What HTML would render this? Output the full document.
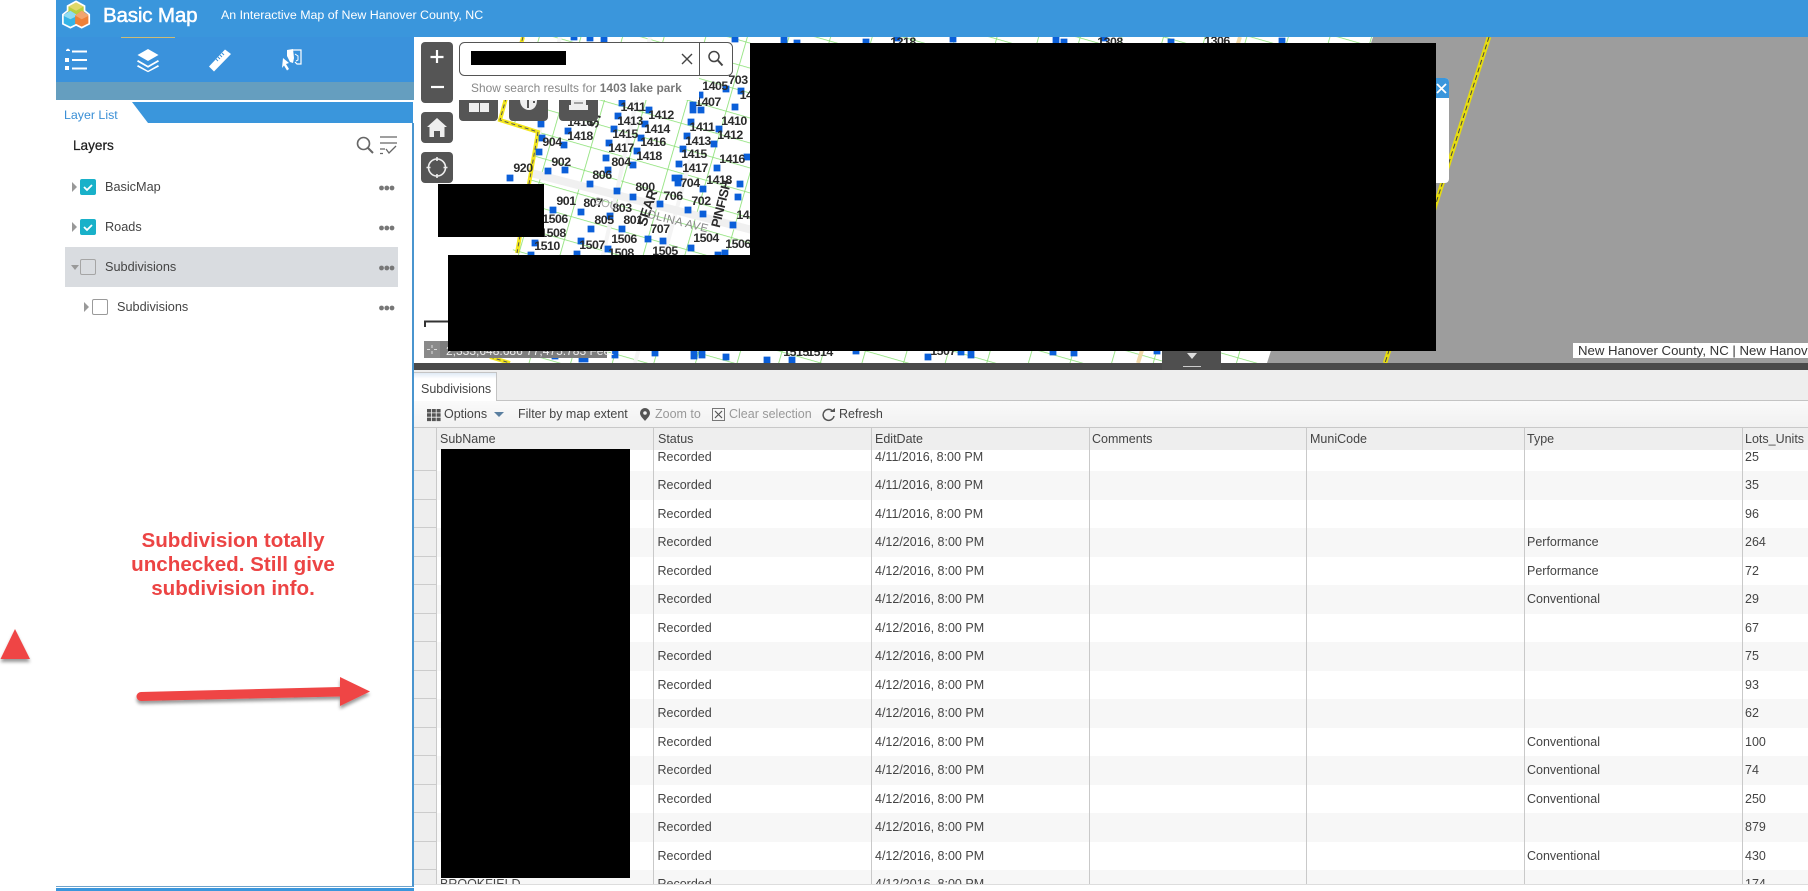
<!DOCTYPE html>
<html lang="en"><head><meta charset="utf-8"><title>Basic Map</title>
<style>
html,body{margin:0;padding:0;background:#fff;width:1808px;height:891px;overflow:hidden}
body{position:relative;font-family:"Liberation Sans",sans-serif;color:#333}
.a{position:absolute}
.t{position:absolute;white-space:nowrap}
#top{left:56px;top:0;width:1752px;height:37px;background:#3a96dc}
#icons{left:56px;top:37px;width:358px;height:45px;background:#3a92dc}
#tealbar{left:56px;top:82px;width:358px;height:18px;background:#659ebf}
#tabs{left:56px;top:102px;width:357px;height:21px;background:#3a96dc}
#panel{left:56px;top:123px;width:356px;height:763px;background:#fff}
.lbl{font-size:12.7px;color:#333;transform:translateY(-50%)}
.row{position:absolute;left:414px;width:1394px;height:28.5px;overflow:hidden}
.row .c{position:absolute;top:0;line-height:28.5px;font-size:12.5px;color:#444;white-space:nowrap}
.alt{background:#f7f7f7}
.sel{position:absolute;left:0;top:0;width:22px;height:100%;background:#eee;border-bottom:1px solid #ccc;box-sizing:border-box}
.c1{left:26px}.c2{left:243.5px}.c3{left:461px}.c6{left:1113px}.c7{left:1331px}
.vl{position:absolute;top:428px;width:1px;height:456px;background:#c9c9c9}
.hd{position:absolute;top:428px;font-size:12.5px;line-height:22px;color:#444;white-space:nowrap}
.tb{position:absolute;top:401px;font-size:12.5px;line-height:26px;white-space:nowrap;color:#444}
.tri{position:absolute;width:0;height:0;border-style:solid;border-color:transparent}
.cb{position:absolute;width:16px;height:16px;box-sizing:border-box;border-radius:2px}
.on{background:#19b1c9}
.off{border:1px solid #9a9a9a;background:#fff}
.red{position:absolute;left:103px;width:260px;text-align:center;font:bold 20.6px/24px "Liberation Sans",sans-serif;color:#ec4444;white-space:nowrap}
</style></head>
<body>

<div class="a" id="top"></div>
<svg class="a" style="left:61px;top:0" width="32" height="29" viewBox="0 0 34 30">
<path d="M16 1l9 5v9l-9 5-9-5V6z" fill="#b8cf3f"/><path d="M16 1l9 5-9 5-9-5z" fill="#e0d86a"/>
<path d="M10 11l8 5v9l-8 4-8-4v-9z" fill="#35b4e6"/><path d="M10 11l8 5-8 4-8-4z" fill="#8fdcf2"/>
<path d="M22 11l8 5v9l-8 4-7-4v-9z" fill="#ef8038"/><path d="M22 11l8 5-8 4-7-4z" fill="#f2a46e"/>
<path d="M16 1l9 5v5l5 4v10l-8 4-6-3-6 3-8-4V15l5-4V6z" fill="none" stroke="#fff" stroke-width="1.800"/>
</svg>
<div class="t" style="left:103px;top:3px;font-size:20.6px;line-height:26px;color:#fff;font-weight:400;letter-spacing:-.2px;-webkit-text-stroke:.5px #fff">Basic Map</div>
<div class="t" style="left:221px;top:7px;font-size:12.4px;line-height:16px;color:#fff">An Interactive Map of New Hanover County, NC</div>

<div class="a" id="icons"></div>
<div class="a" style="left:121px;top:37px;width:54px;height:1px;background:#cdbb74"></div>
<svg class="a" style="left:56px;top:37px" width="358" height="45" viewBox="56 37 358 45" fill="#fff">
<path d="M66 50l2-1.500 2 1.500v1h-4zM65 58h4v4h-4zM65 66h4v4h-4z"/>
<path d="M72 50.500h15v2H72zM72 59h15v2H72zM72 67.500h15v2H72z"/>
<path d="M148 49l10.500 6-10.500 6-10.500-6z"/>
<path d="M138 60l10 5.800 10-5.800 1 1.500-11 6.200-11-6.200zM138 65l10 5.800 10-5.800 1 1.500-11 5.700-11-5.700z"/>
<path d="M225 49.500l6 4.500-17 17.500-5-5z"/>
<path d="M216 59l2 2m0-4l2 2m0-4l2 2m0-4l2 2" stroke="#3a92dc" fill="none"/>
<path d="M283 58l6 5-3 1 3 5-2 1.500-3-5-2 2.500z"/>
<path d="M287 50l6-1 1 9-1 5-3-1-3-6z" />
<path d="M293 50h8v14h-4l-2-2" fill="none" stroke="#fff" stroke-width="1.200"/>
<path d="M295 54l3 2v4l-2 1" fill="none" stroke="#fff"/>
</svg>
<div class="a" id="tealbar"></div>
<div class="a" id="tabs"></div>
<svg class="a" style="left:56px;top:102px" width="100" height="22"><path d="M0 0H76L92 21H0z" fill="#fff"/></svg>
<div class="t" style="left:64px;top:107px;font-size:12.4px;line-height:16px;color:#3a8fd6">Layer List</div>

<div class="a" id="panel"></div>
<div class="a" style="left:412px;top:123px;width:1.500px;height:764px;background:#4a95cf"></div>
<div class="a" style="left:56px;top:886px;width:357px;height:1px;background:#6fa3cc"></div>
<div class="a" style="left:56px;top:888px;width:358px;height:3px;background:#3a96dc"></div>

<div class="t" style="left:73px;top:137px;font-size:13.6px;line-height:18px;color:#1f1f1f;-webkit-text-stroke:.25px #1f1f1f">Layers</div>
<svg class="a" style="left:353px;top:134px" width="48" height="22" fill="none" stroke="#666">
<circle cx="10.500" cy="9.500" r="6" stroke-width="1.600"/><path d="M15 14l5 5" stroke-width="2"/>
<path d="M27 3h17M27 9h17M27 15h5M27 19.500h3M33 15l3 4 7-7" stroke-width="1.300"/>
</svg>

<div class="tri" style="left:72px;top:182px;border-width:5px 0 5px 5px;border-left-color:#999"></div>
<div class="cb on" style="left:80px;top:179px"></div>
<svg class="a" style="left:80px;top:179px" width="16" height="16"><path d="M4 8l3 3 5-5" fill="none" stroke="#fff" stroke-width="1.800"/></svg>
<div class="t lbl" style="left:105px;top:187px;color:#444">BasicMap</div>

<div class="tri" style="left:72px;top:222px;border-width:5px 0 5px 5px;border-left-color:#999"></div>
<div class="cb on" style="left:80px;top:219px"></div>
<svg class="a" style="left:80px;top:219px" width="16" height="16"><path d="M4 8l3 3 5-5" fill="none" stroke="#fff" stroke-width="1.800"/></svg>
<div class="t lbl" style="left:105px;top:227px;color:#444">Roads</div>

<div class="a" style="left:65px;top:247px;width:333px;height:40px;background:#d9dce0"></div>
<div class="tri" style="left:71px;top:265px;border-width:5px 4px 0 4px;border-top-color:#999"></div>
<div class="cb" style="left:80px;top:259px;border:1px solid #a5a5a5"></div>
<div class="t lbl" style="left:105px;top:267px;color:#444">Subdivisions</div>

<div class="tri" style="left:84px;top:302px;border-width:5px 0 5px 5px;border-left-color:#999"></div>
<div class="cb off" style="left:92px;top:299px"></div>
<div class="t lbl" style="left:117px;top:307px;color:#444">Subdivisions</div>

<svg class="a" style="left:378px;top:180px" width="18" height="140" fill="#777">
<circle cx="3.500" cy="8" r="2.400"/><circle cx="8.800" cy="8" r="2.400"/><circle cx="14" cy="8" r="2.400"/>
<circle cx="3.500" cy="48" r="2.400"/><circle cx="8.800" cy="48" r="2.400"/><circle cx="14" cy="48" r="2.400"/>
<circle cx="3.500" cy="88" r="2.400"/><circle cx="8.800" cy="88" r="2.400"/><circle cx="14" cy="88" r="2.400"/>
<circle cx="3.500" cy="128" r="2.400"/><circle cx="8.800" cy="128" r="2.400"/><circle cx="14" cy="128" r="2.400"/>
</svg>

<div class="red" style="top:529px">Subdivision totally</div>
<div class="red" style="top:553px">unchecked. Still give</div>
<div class="red" style="top:577px">subdivision info.</div>
<svg class="a" style="left:0;top:620px" width="400" height="100">
<defs><filter id="sh" x="-10%" y="-20%" width="120%" height="160%"><feDropShadow dx="0" dy="3" stdDeviation="1.500" flood-color="#000" flood-opacity=".4"/></filter></defs>
<path d="M0.500 39L15 9 30 39z" fill="#ef4444" filter="url(#sh)"/>
<path d="M141 72L340 67V57L370 71.500 340 86V76.500L141 81a4.500 4.500 0 0 1 0-9z" fill="#ef4444" filter="url(#sh)"/>
</svg>

<!-- MAP -->
<svg class="a" style="left:414px;top:37px" width="1394" height="326" viewBox="414 37 1394 326" font-family="Liberation Sans, sans-serif">
<defs>
<pattern id="lots" width="40" height="24" patternUnits="userSpaceOnUse" patternTransform="rotate(16 500 100)">
<path d="M0 0V24M0 0H40" fill="none" stroke="#86e070" stroke-width="1.600"/>
</pattern>
<clipPath id="pc"><path d="M523 37L500 120 538 132 490 357 510 363H1267L1373 37z"/></clipPath>
</defs>
<rect x="414" y="37" width="1394" height="326" fill="#fff"/>
<rect x="1200" y="37" width="608" height="326" fill="#9d9d9d"/>
<path d="M1150 37H1373L1267 363H1150z" fill="#fff"/>
<g clip-path="url(#pc)">
<rect x="414" y="37" width="1000" height="326" fill="url(#lots)"/>
<path d="M560 37L540 130 480 363M650 37L580 363M690 160L635 363" stroke="#f4f4f4" stroke-width="4" fill="none"/>
<path d="M500 165L760 232" stroke="#f0f0f0" stroke-width="8" fill="none"/>
<path d="M1240 37L1138 363" stroke="#f1d9a8" stroke-width="4" fill="none"/>
</g>
<path d="M523 37L500 120 538 132 517 253M490 357L510 363" fill="none" stroke="#f3e71c" stroke-width="4"/>
<path d="M523 37L500 120 538 132 517 253M490 357L510 363" fill="none" stroke="#555" stroke-width="1" stroke-dasharray="4 3"/>
<path d="M1489 37L1385 363" fill="none" stroke="#e6dc10" stroke-width="4.500"/>
<path d="M1489 37L1385 363" fill="none" stroke="#444" stroke-width="1" stroke-dasharray="5 3"/>

<path fill="#0b5fd9" stroke="#0b5fd9" stroke-width=".8" d="M723 86h6v6h-6zM738 88h6v6h-6zM697 92h6v6h-6zM690 102h6v7h-6zM690 107h6v6h-6zM698 107h6v6h-6zM732 104h6v6h-6zM619 100h6v6h-6zM646 107h6v6h-6zM615 113h6v6h-6zM642 121h6v6h-6zM688 119h6v6h-6zM716 126h6v6h-6zM611 126h6v6h-6zM638 135h6v6h-6zM684 133h6v6h-6zM711 141h6v6h-6zM606 140h6v6h-6zM634 148h6v6h-6zM680 146h6v6h-6zM744 154h6v6h-6zM603 155h6v6h-6zM630 162h6v6h-6zM676 161h6v6h-6zM714 165h6v6h-6zM538 121h6v6h-6zM565 128h6v6h-6zM539 135h6v6h-6zM561 142h6v6h-6zM536 149h6v6h-6zM507 175h6v6h-6zM545 168h6v6h-6zM562 167h6v6h-6zM605 167h6v6h-6zM587 181h6v6h-6zM614 188h6v6h-6zM630 194h6v6h-6zM672 175h6v6h-6zM676 175h6v6h-6zM675 180h6v6h-6zM700 186h6v6h-6zM737 181h6v6h-6zM735 194h6v6h-6zM657 201h6v6h-6zM685 207h6v6h-6zM700 211h6v6h-6zM550 207h6v6h-6zM578 209h6v6h-6zM607 213h6v6h-6zM619 226h6v6h-6zM588 226h6v6h-6zM730 222h6v6h-6zM645 236h6v6h-6zM660 238h6v6h-6zM688 245h6v6h-6zM532 240h6v6h-6zM578 238h6v6h-6zM605 246h6v6h-6zM715 252h6v6h-6zM722 250h6v6h-6zM528 252h6v6h-6zM574 251h6v6h-6z
M571 37h6v3h-6zM587 37h6v4h-6zM601 37h6v5h-6zM732 37h6v5h-6zM781 37h6v6h-6zM794 40h6v6h-6zM863 39h6v6h-6zM894 37h6v4h-6zM950 37h6v5h-6zM1053 37h6v6h-6zM1061 39h6v6h-6zM1101 37h6v4h-6zM1168 39h6v6h-6zM1279 38h6v6h-6z
M552 350h6v9h-6zM579 351h9v11h-9zM612 351h6v7h-6zM652 351h6v5h-6zM691 351h6v8h-6zM699 351h6v7h-6zM723 354h6v6h-6zM764 357h6v6h-6zM789 357h6v6h-6zM853 351h6v3h-6zM925 354h6v6h-6zM958 351h6v4h-6zM968 351h6v7h-6zM1050 351h6v4h-6zM1071 351h6v5h-6zM1154 351h6v3h-6z"/>

<g font-size="12.400" font-weight="700" fill="#2c2c2c" text-anchor="middle" letter-spacing="-.5" dominant-baseline="central">
<text x="715" y="86">1405</text><text x="738" y="80">703</text><text x="708" y="102">1407</text><text x="633" y="107">1411</text><text x="661" y="115">1412</text><text x="630" y="121">1413</text><text x="657" y="129">1414</text><text x="702" y="127">1411</text><text x="734" y="121">1410</text><text x="730" y="135">1412</text><text x="625" y="134">1415</text><text x="653" y="142">1416</text><text x="698" y="141">1413</text><text x="580" y="136">1418</text><text x="552" y="142">904</text><text x="621" y="148">1417</text><text x="649" y="156">1418</text><text x="694" y="154">1415</text><text x="732" y="159">1416</text><text x="621" y="162">804</text><text x="695" y="168">1417</text><text x="561" y="162">902</text><text x="523" y="168">920</text><text x="602" y="175">806</text><text x="645" y="187">800</text><text x="690" y="183">704</text><text x="719" y="180">1418</text><text x="566" y="201">901</text><text x="593" y="203">807</text><text x="622" y="208">803</text><text x="673" y="196">706</text><text x="701" y="201">702</text><text x="555" y="219">1506</text><text x="604" y="220">805</text><text x="633" y="220">801</text><text x="660" y="229">707</text><text x="553" y="233">1508</text><text x="547" y="246">1510</text><text x="592" y="245">1507</text><text x="624" y="239">1506</text><text x="706" y="238">1504</text><text x="621" y="253">1508</text><text x="665" y="251">1505</text><text x="738" y="244">1506</text><text x="746" y="215">142</text><text x="746" y="95">14</text><text x="580" y="122">1416</text>
<text x="903" y="42">1218</text><text x="1110" y="42">1308</text><text x="1217" y="41">1306</text><text x="796" y="352">1515</text><text x="820" y="352">1514</text><text x="943" y="351">1507</text>
<text x="647" y="208" font-size="14" transform="rotate(-72 647 208)">SEAR</text>
<text x="721" y="204" font-size="13" transform="rotate(-76 721 204)">PINFISH</text>
<text x="595" y="120" font-size="13" transform="rotate(-75 595 120)">ST</text>
</g>
<text x="677" y="225" font-size="11.500" fill="#888" text-anchor="middle" transform="rotate(14 677 225)" letter-spacing=".5">OLINA AVE</text>
<text x="605" y="207" font-size="11" fill="#aaa" text-anchor="middle" transform="rotate(14 605 207)">SOU</text>

<!-- search panel -->
<rect x="459" y="76" width="240" height="24" fill="#fff"/>
<rect x="459.500" y="42.500" width="273" height="33" rx="5" fill="#fff" stroke="#555"/>
<path d="M699.500 43V75" stroke="#555"/>
<path d="M682 54l10 10M692 54l-10 10" stroke="#444" stroke-width="1.400" fill="none"/>
<circle cx="714" cy="56.500" r="5" fill="none" stroke="#444" stroke-width="1.500"/><path d="M718 60.500l4.500 5" stroke="#444" stroke-width="2"/>
<text x="471" y="92" font-size="11.900" fill="#888" letter-spacing=".05">Show search results for <tspan font-weight="700" fill="#777">1403 lake park</tspan></text>

<!-- map controls -->
<rect x="421" y="42" width="32" height="61" rx="4" fill="#555"/>
<path d="M437 50v13M430.500 57h13" stroke="#fff" stroke-width="2.200"/>
<path d="M431 87h13" stroke="#fff" stroke-width="2.200"/>
<rect x="421" y="112" width="32" height="31" rx="4" fill="#555"/>
<path d="M437 118l10 9h-2.500v10H440v-6h-6v6h-4.500V127H427z" fill="#eee"/>
<rect x="421" y="152" width="32" height="31" rx="4" fill="#555"/>
<circle cx="437" cy="167.500" r="8.500" fill="none" stroke="#eee" stroke-width="1.600"/><path d="M437 157v4M437 174v4M426.500 167.500h4M443.500 167.500h4" stroke="#eee" stroke-width="1.600"/>
<path d="M459 100h39v17a4 4 0 0 1-4 4h-31a4 4 0 0 1-4-4zM509 100h39v17a4 4 0 0 1-4 4h-31a4 4 0 0 1-4-4zM559 100h39v17a4 4 0 0 1-4 4h-31a4 4 0 0 1-4-4z" fill="#555"/>
<path d="M469 103h10v9h-10zM480 103h9v9h-9z" fill="#eee"/>
<path d="M520 100h17c0 6-3 10-8 10s-9-4-9-10z" fill="#eee"/><path d="M528 100v8M533 102h2" stroke="#555" stroke-width="2"/>
<path d="M571 100h15v5h2v5h-19v-5h2z" fill="#eee"/><path d="M574 103h9" stroke="#555"/>

<!-- scale + coords -->
<path d="M425 327v-5.500h25" fill="none" stroke="#333" stroke-width="2"/>
<rect x="424" y="341" width="183" height="17" fill="#7d7d7d"/>
<rect x="424" y="341" width="16" height="17" fill="#8a8a8a"/>
<path d="M432 345v3M432 351v3M427 349.500h3M434 349.500h3" stroke="#ddd"/>
<text x="446" y="355" font-size="12" fill="#eee">2,333,648.686 77,475.783 Feet</text>

<!-- floating panel -->
<path d="M1430 78h15a4 4 0 0 1 4 4v97a4 4 0 0 1-4 4h-15z" fill="#fff"/>
<path d="M1430 78h15a4 4 0 0 1 4 4v16h-19z" fill="#3a96dc"/>
<path d="M1437 84l9 9M1446 84l-9 9" stroke="#fff" stroke-width="1.800"/>

<!-- attribution -->
<rect x="1573" y="343" width="235" height="15" fill="#fff"/>
<text x="1578" y="355" font-size="13.200" fill="#333">New Hanover County, NC | New Hanover County, NC</text>

<!-- tab handle -->
<rect x="1162" y="351" width="59" height="12" fill="#4f4f4f"/>
<path d="M1187 353h10l-5 6z" fill="#ddd"/>

<!-- redactions -->
<rect x="471" y="51" width="95" height="14" fill="#000"/>
<rect x="750" y="43" width="686" height="308" fill="#000"/>
<rect x="448" y="255" width="302" height="96" fill="#000"/>
<rect x="438" y="184" width="106" height="53" fill="#000"/>
</svg>

<!-- splitter -->
<div class="a" style="left:414px;top:363px;width:1394px;height:7px;background:#4a4a4a"></div>
<div class="a" style="left:1162px;top:363px;width:59px;height:7px;background:#4f4f4f"></div>
<div class="a" style="left:1183px;top:366px;width:18px;height:1px;background:#ccc"></div>

<!-- Table area -->
<div class="a" style="left:414px;top:370px;width:1394px;height:30px;background:#eee;border-bottom:1px solid #c4c4c4"></div>
<div class="a" style="left:414px;top:372px;width:82px;height:29px;background:linear-gradient(#dfeaf5,#fff 20%,#fff);border:1px solid #c4c4c4;border-bottom:none;border-left:none;box-sizing:content-box"></div>
<div class="t" style="left:421px;top:381px;font-size:12.500px;line-height:17px;color:#444">Subdivisions</div>

<div class="a" style="left:414px;top:401px;width:1394px;height:26px;background:linear-gradient(#fafafa,#f1f1f1);border-bottom:1px solid #c8c8c8"></div>
<svg class="a" style="left:427px;top:408px" width="14" height="14" fill="#555">
<path d="M0 1h4v3.500H0zM4.800 1h4v3.500h-4zM9.600 1h4v3.500h-4zM0 5.300h4v3.500H0zM4.800 5.300h4v3.500h-4zM9.600 5.300h4v3.500h-4zM0 9.600h4v3.500H0zM4.800 9.600h4v3.500h-4zM9.600 9.600h4v3.500h-4z"/></svg>
<div class="tb" style="left:444px">Options</div>
<div class="tri" style="left:494px;top:412px;border-width:5px 5px 0 5px;border-top-color:#5a7fa0"></div>
<div class="tb" style="left:518px">Filter by map extent</div>
<svg class="a" style="left:639px;top:407px" width="12" height="15"><path d="M6 1a5 5 0 0 1 5 5c0 3-3 5.500-5 8-2-2.500-5-5-5-8a5 5 0 0 1 5-5z" fill="#555"/><circle cx="6" cy="6" r="1.800" fill="#f5f5f5"/></svg>
<div class="tb" style="left:655px;color:#999">Zoom to</div>
<svg class="a" style="left:712px;top:408px" width="14" height="14"><rect x=".5" y=".5" width="12" height="12" fill="none" stroke="#777"/><path d="M3 3l7 7M10 3l-7 7" stroke="#555" stroke-width="1.200"/></svg>
<div class="tb" style="left:729px;color:#999">Clear selection</div>
<svg class="a" style="left:822px;top:408px" width="14" height="14"><path d="M11 3.500A5.500 5.500 0 1 0 12 8" fill="none" stroke="#555" stroke-width="1.500"/><path d="M8 4h5V0z" fill="#555"/></svg>
<div class="tb" style="left:839px">Refresh</div>

<div class="a" style="left:414px;top:428px;width:1394px;height:22px;background:#eee"></div>
<div class="hd" style="left:440px">SubName</div>
<div class="hd" style="left:658px">Status</div>
<div class="hd" style="left:875px">EditDate</div>
<div class="hd" style="left:1092px">Comments</div>
<div class="hd" style="left:1310px">MuniCode</div>
<div class="hd" style="left:1527px">Type</div>
<div class="hd" style="left:1745px">Lots_Units</div>

<div class="a" style="left:414px;top:450px;width:1394px;height:434px;overflow:hidden;background:#fff">
<div class="row" style="left:0;top:-7.500px"><span class="sel"></span><span class="c c2">Recorded</span><span class="c c3">4/11/2016, 8:00 PM</span><span class="c c7">25</span></div>
<div class="row alt" style="left:0;top:21px"><span class="sel"></span><span class="c c2">Recorded</span><span class="c c3">4/11/2016, 8:00 PM</span><span class="c c7">35</span></div>
<div class="row" style="left:0;top:49.500px"><span class="sel"></span><span class="c c2">Recorded</span><span class="c c3">4/11/2016, 8:00 PM</span><span class="c c7">96</span></div>
<div class="row alt" style="left:0;top:78px"><span class="sel"></span><span class="c c2">Recorded</span><span class="c c3">4/12/2016, 8:00 PM</span><span class="c c6">Performance</span><span class="c c7">264</span></div>
<div class="row" style="left:0;top:106.500px"><span class="sel"></span><span class="c c2">Recorded</span><span class="c c3">4/12/2016, 8:00 PM</span><span class="c c6">Performance</span><span class="c c7">72</span></div>
<div class="row alt" style="left:0;top:135px"><span class="sel"></span><span class="c c2">Recorded</span><span class="c c3">4/12/2016, 8:00 PM</span><span class="c c6">Conventional</span><span class="c c7">29</span></div>
<div class="row" style="left:0;top:163.500px"><span class="sel"></span><span class="c c2">Recorded</span><span class="c c3">4/12/2016, 8:00 PM</span><span class="c c7">67</span></div>
<div class="row alt" style="left:0;top:192px"><span class="sel"></span><span class="c c2">Recorded</span><span class="c c3">4/12/2016, 8:00 PM</span><span class="c c7">75</span></div>
<div class="row" style="left:0;top:220.500px"><span class="sel"></span><span class="c c2">Recorded</span><span class="c c3">4/12/2016, 8:00 PM</span><span class="c c7">93</span></div>
<div class="row alt" style="left:0;top:249px"><span class="sel"></span><span class="c c2">Recorded</span><span class="c c3">4/12/2016, 8:00 PM</span><span class="c c7">62</span></div>
<div class="row" style="left:0;top:277.500px"><span class="sel"></span><span class="c c2">Recorded</span><span class="c c3">4/12/2016, 8:00 PM</span><span class="c c6">Conventional</span><span class="c c7">100</span></div>
<div class="row alt" style="left:0;top:306px"><span class="sel"></span><span class="c c2">Recorded</span><span class="c c3">4/12/2016, 8:00 PM</span><span class="c c6">Conventional</span><span class="c c7">74</span></div>
<div class="row" style="left:0;top:334.500px"><span class="sel"></span><span class="c c2">Recorded</span><span class="c c3">4/12/2016, 8:00 PM</span><span class="c c6">Conventional</span><span class="c c7">250</span></div>
<div class="row alt" style="left:0;top:363px"><span class="sel"></span><span class="c c2">Recorded</span><span class="c c3">4/12/2016, 8:00 PM</span><span class="c c7">879</span></div>
<div class="row" style="left:0;top:391.500px"><span class="sel"></span><span class="c c2">Recorded</span><span class="c c3">4/12/2016, 8:00 PM</span><span class="c c6">Conventional</span><span class="c c7">430</span></div>
<div class="row alt" style="left:0;top:420px"><span class="sel"></span><span class="c c1">BROOKFIELD</span><span class="c c2">Recorded</span><span class="c c3">4/12/2016, 8:00 PM</span><span class="c c7">174</span></div>
</div>
<div class="vl" style="left:436px"></div><div class="vl" style="left:653px"></div><div class="vl" style="left:871px"></div><div class="vl" style="left:1089px"></div><div class="vl" style="left:1306px"></div><div class="vl" style="left:1524px"></div><div class="vl" style="left:1742px"></div>
<div class="a" style="left:414px;top:884px;width:1394px;height:1px;background:#ddd"></div>
<div class="a" style="left:441px;top:449px;width:189px;height:429px;background:#000"></div>
</body></html>
